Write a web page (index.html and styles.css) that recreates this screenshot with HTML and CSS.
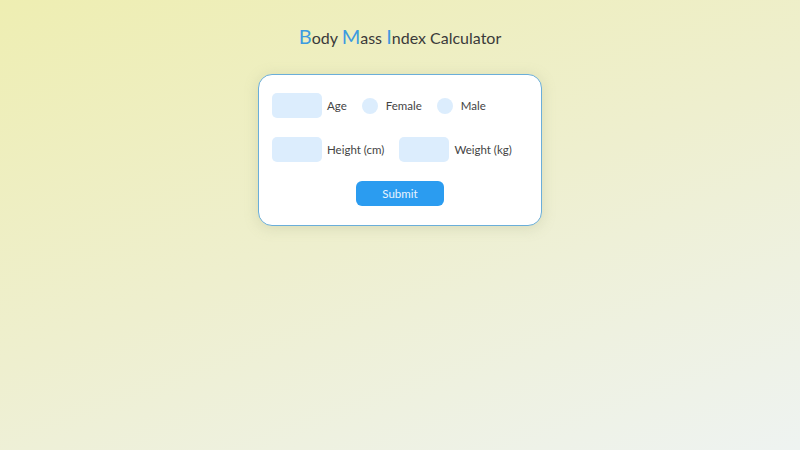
FILE: index.html
```html
<!DOCTYPE html>
<html>
<head>
<meta charset="utf-8">
<link rel="stylesheet" href="styles.css">
</head>
<body>
<h1 class="title"><span class="cap">B</span>ody <span class="cap">M</span>ass <span class="cap">I</span>ndex Calculator</h1>
<form class="card">
  <div class="row">
    <input class="field" type="text"><label class="lbl">Age</label>
    <span class="radio"></span><label class="lbl">Female</label>
    <span class="radio"></span><label class="lbl">Male</label>
  </div>
  <div class="row">
    <input class="field" type="text"><label class="lbl">Height (cm)</label>
    <input class="field" type="text"><label class="lbl">Weight (kg)</label>
  </div>
  <div class="actions">
    <button class="submit" type="button">Submit</button>
  </div>
</form>
</body>
</html>
```
FILE: styles.css
```css
html, body { margin: 0; height: 100%; }
body {
  background: linear-gradient(160deg, #eeeeb2 0%, #eeefcf 50%, #eef3f1 100%);
  font-family: Lato, "Noto Sans", sans-serif;
  color: #444;
  display: flex;
  flex-direction: column;
  align-items: center;
}
.title {
  margin: 24px 0 0;
  font-weight: 400;
  font-size: 16px;
  color: #3a3a3a;
  height: 24px;
  line-height: 24px;
}
.cap { color: #3d9be0; font-size: 20px; }
.card {
  margin-top: 26px;
  width: 256px;
  padding: 18px 13px 19px;
  background: #fff;
  border: 1px solid #6aaed9;
  border-radius: 14px;
  box-shadow: 0 2px 14px rgba(150,160,120,0.25);
  display: flex;
  flex-direction: column;
  gap: 19px;
}
.row { display: flex; align-items: center; height: 25px; }
.field {
  width: 50px; height: 25px; box-sizing: border-box; flex: none;
  border: none; border-radius: 5px; background: #dcedfd;
  margin: 0 5px 0 0; padding: 0;
}
.lbl { font-size: 11.5px; color: #444; margin-right: 15px; white-space: nowrap; }
.radio {
  width: 16px; height: 16px; border-radius: 50%; flex: none;
  background: #dcedfd; margin-right: 8px;
}
.actions { display: flex; justify-content: center; }
.submit {
  width: 88px; height: 25px; border: none; border-radius: 6px;
  background: #2b9cf0; color: #e8f4ff; font-family: inherit; font-size: 11.5px;
}
```
